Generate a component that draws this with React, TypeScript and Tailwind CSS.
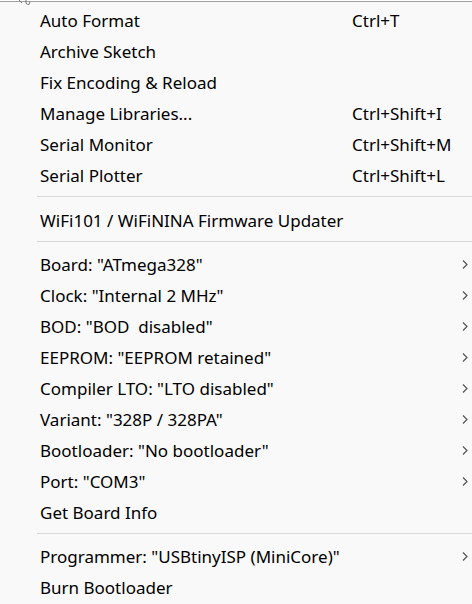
import React from 'react'

type Item = { label: string; shortcut?: string; sub?: boolean } | 'sep'

const items: Item[] = [
  { label: 'Auto Format', shortcut: 'Ctrl+T' },
  { label: 'Archive Sketch' },
  { label: 'Fix Encoding & Reload' },
  { label: 'Manage Libraries...', shortcut: 'Ctrl+Shift+I' },
  { label: 'Serial Monitor', shortcut: 'Ctrl+Shift+M' },
  { label: 'Serial Plotter', shortcut: 'Ctrl+Shift+L' },
  'sep',
  { label: 'WiFi101 / WiFiNINA Firmware Updater' },
  'sep',
  { label: 'Board: "ATmega328"', sub: true },
  { label: 'Clock: "Internal 2 MHz"', sub: true },
  { label: 'BOD: "BOD  disabled"', sub: true },
  { label: 'EEPROM: "EEPROM retained"', sub: true },
  { label: 'Compiler LTO: "LTO disabled"', sub: true },
  { label: 'Variant: "328P / 328PA"', sub: true },
  { label: 'Bootloader: "No bootloader"', sub: true },
  { label: 'Port: "COM3"', sub: true },
  { label: 'Get Board Info' },
  'sep',
  { label: 'Programmer: "USBtinyISP (MiniCore)"', sub: true },
  { label: 'Burn Bootloader' },
]

function Chevron() {
  return (
    <svg width="6" height="9" viewBox="0 0 6 9" className="absolute right-[4px] top-[11px]">
      <polyline points="1,0.5 5,4.5 1,8.5" fill="none" stroke="#555" strokeWidth="1.2" />
    </svg>
  )
}

export default function App() {
  return (
    <div
      className="relative w-[472px] h-[604px] overflow-hidden bg-[#f9f9f9] text-[17px] text-black"
      style={{ fontFamily: '"Noto Sans", "Open Sans", sans-serif' }}
    >
      <div className="h-px bg-white" />
      <div className="h-px bg-[#a0a0a0]" />
      {/* cursor bit peeking in at the top */}
      <svg width="14" height="6" viewBox="0 0 14 6" className="absolute left-[18px] top-0">
        <path d="M1 0 L4 3 M8 0 L8 3 Q9 5 11 4.5 L12 2" fill="none" stroke="#777" strokeWidth="1" />
      </svg>
      <div className="pt-[3px]">
        {items.map((it, i) => {
          if (it === 'sep') {
            const first = i === 6
            return (
              <div key={i} className={first ? 'h-[14px] pt-[5px] pl-[37px]' : 'h-[13px] pt-[5px] pl-[37px]'}>
                <div className="h-px bg-[#d8d8d8]" />
              </div>
            )
          }
          return (
            <div key={i} className="relative flex items-center h-[31px] pl-[40px] leading-none whitespace-pre">
              <span>{it.label}</span>
              {it.shortcut && <span className="absolute left-[352px]">{it.shortcut}</span>}
              {it.sub && <Chevron />}
            </div>
          )
        })}
      </div>
    </div>
  )
}
